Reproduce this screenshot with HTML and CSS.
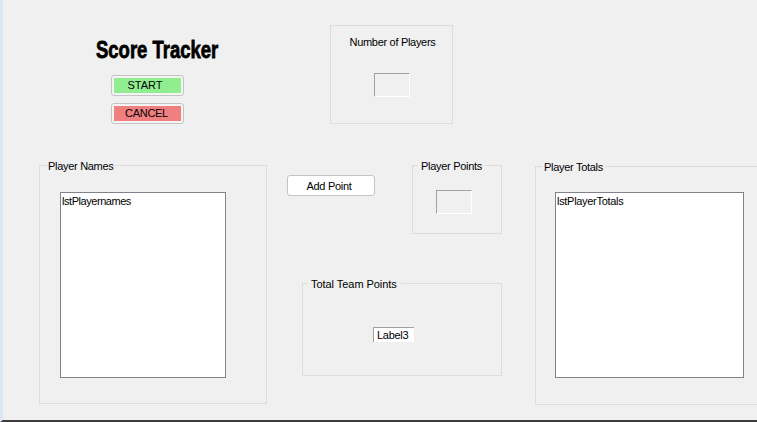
FILE: index.html
```html
<!DOCTYPE html>
<html lang="en">
<head>
  <meta charset="UTF-8" />
  <title>Score Tracker</title>
  <link rel="stylesheet" href="styles.css">
</head>
<body>
  <div class="form">
    <div class="top">
      <div class="header">
        <h1>Score Tracker</h1>
        <button class="btn btn-start"><span>START</span></button>
        <button class="btn btn-cancel"><span>CANCEL</span></button>
      </div>
      <div class="players-box">
        <div class="players-label">Number of Players</div>
        <input class="num-input" type="text">
      </div>
    </div>

    <div class="bottom">
      <fieldset class="group group-names">
        <legend>Player Names</legend>
        <div class="listbox">lstPlayernames</div>
      </fieldset>

      <div class="middle">
        <div class="middle-top">
          <button class="add-point">Add Point</button>
          <fieldset class="group group-points">
            <legend>Player Points</legend>
            <input class="num-input" type="text">
          </fieldset>
        </div>
        <fieldset class="group group-team">
          <legend>Total Team Points</legend>
          <div class="team-label">Label3</div>
        </fieldset>
      </div>

      <fieldset class="group group-totals">
        <legend>Player Totals</legend>
        <div class="listbox">lstPlayerTotals</div>
      </fieldset>
    </div>
  </div>
</body>
</html>
```

FILE: styles.css
```css
html, body {
  margin: 0;
  height: 422px;
  overflow: hidden;
}
body {
  font-family: 'Liberation Sans', Arial, sans-serif;
  font-size: 11px;
  letter-spacing: -0.3px;
  color: #000;
  background: #f0f0f0;
}
.form {
  box-sizing: border-box;
  height: 422px;
  border-left: 3px solid #dce6f3;
  border-bottom: 2px solid #3c3c3c;
  background: #f0f0f0;
}
.top {
  display: flex;
  height: 132px;
  padding-top: 25px;
}
.header {
  flex: none;
  width: 234px;
  padding-left: 93px;
  display: flex;
  flex-direction: column;
}
h1 {
  margin: 12px 0 12px;
  font-size: 24px;
  line-height: 26px;
  font-weight: bold;
  letter-spacing: 0;
  white-space: nowrap;
  -webkit-text-stroke: 0.8px #000;
  transform: scaleX(0.77);
  transform-origin: left center;
}
.btn {
  width: 73px;
  height: 21px;
  margin: 0 0 7px 15px;
  padding: 2px;
  background: #f4f4f4;
  border: 1px solid #c4c4c4;
  border-radius: 3px;
  font: inherit;
  letter-spacing: inherit;
  color: #000;
}
.btn span {
  display: block;
  height: 15px;
  line-height: 15px;
}
.btn-start span {
  padding-right: 5px;
  letter-spacing: 0;
  background: #90ee90;
}
.btn-cancel span {
  padding-right: 2px;
  background: #f08080;
}
.players-box {
  flex: none;
  box-sizing: border-box;
  width: 123px;
  height: 99px;
  padding-left: 2px;
  border: 1px solid #dcdcdc;
  text-align: center;
}
.players-label {
  margin-top: 10px;
  line-height: 13px;
}
.num-input {
  display: block;
  box-sizing: border-box;
  width: 36px;
  height: 24px;
  padding: 0;
  background: #f0f0f0;
  border: 1px solid;
  border-color: #a0a0a0 #fff #fff #a0a0a0;
}
.players-box .num-input {
  margin: 24px 0 0 41px;
}
.bottom {
  display: flex;
  align-items: flex-start;
}
.group {
  flex: none;
  box-sizing: border-box;
  margin: 0;
  padding: 0;
  border: 1px solid #dcdcdc;
}
.group legend {
  margin-left: 7px;
  padding: 2px 1px 0;
  line-height: 14px;
  white-space: nowrap;
}
.listbox {
  box-sizing: border-box;
  height: 186px;
  padding: 2px 0 0 1px;
  background: #fff;
  border: 1px solid #82828a;
  line-height: 13px;
}
.group-names {
  width: 228px;
  height: 247px;
  margin-left: 36px;
}
.group-names .listbox {
  width: 166px;
  margin: 19px 0 0 20px;
  letter-spacing: -0.45px;
}
.middle {
  flex: none;
  width: 215px;
  margin-left: 20px;
}
.middle-top {
  display: flex;
  justify-content: space-between;
}
.add-point {
  box-sizing: border-box;
  width: 88px;
  height: 21px;
  margin-top: 18px;
  padding: 0 4px 0 0;
  background: #fff;
  border: 1px solid #c4c4c4;
  border-radius: 3px;
  font: inherit;
  letter-spacing: inherit;
  color: #000;
}
.group-points {
  width: 90px;
  height: 77px;
}
.group-points legend {
  margin-left: 5px;
  padding: 2px 3px 0;
}
.group-points .num-input {
  margin: 17px 0 0 23px;
}
.group-team {
  width: 200px;
  height: 101px;
  margin: 41px 0 0 15px;
}
.group-team legend {
  margin-left: 5px;
  padding: 2px 4px 0 3px;
  letter-spacing: -0.05px;
}
.team-label {
  box-sizing: border-box;
  width: 41px;
  height: 15px;
  margin: 36px 0 0 70px;
  padding-left: 3px;
  background: #fff;
  border-left: 1px solid #a0a0a0;
  border-top: 1px solid #a0a0a0;
  line-height: 14px;
}
.group-totals {
  width: 240px;
  height: 247px;
  margin: 1px 0 0 33px;
}
.group-totals legend {
  margin-left: 6px;
  padding: 2px 2px 0;
}
.group-totals .listbox {
  width: 189px;
  margin: 18px 0 0 19px;
}
```
